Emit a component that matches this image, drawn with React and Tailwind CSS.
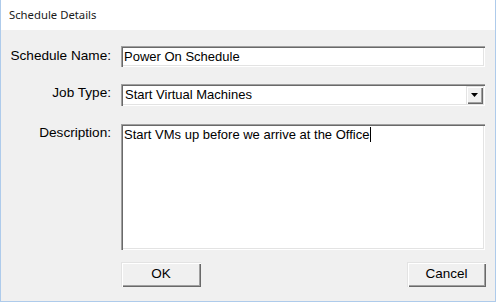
import React from "react";

const SUNKEN =
    "shadow-[inset_1px_1px_0_#a0a0a0,inset_2px_2px_0_#696969,inset_-1px_-1px_0_#ffffff,inset_-2px_-2px_0_#e3e3e3]";
const RAISED =
    "shadow-[inset_1px_1px_0_#e3e3e3,inset_2px_2px_0_#ffffff,inset_-1px_-1px_0_#696969,inset_-2px_-2px_0_#a0a0a0]";

function Label({ children, className = "" }) {
    return (
        <div className={`w-[110px] shrink-0 text-right text-[13.6px] ${className}`}>
            {children}
        </div>
    );
}

export default function App() {
    return (
        <div className="h-[303px] w-[500px] bg-white font-['Liberation_Sans',Arial,sans-serif] text-[13px] text-black">
            <div className="flex h-[302px] w-[496px] flex-col border-x border-b border-[#aecbeb]">
                {/* Title bar */}
                <div className="flex h-[30px] shrink-0 items-center bg-white pl-[8px] font-['Noto_Sans',sans-serif] text-[11.3px] text-[#1a1a1a]">
                    Schedule Details
                </div>

                {/* Body */}
                <div className="flex flex-1 flex-col bg-[#f0f0f0] pt-[16px] pr-[9px]">
                    <div className="flex items-center">
                        <Label>Schedule Name:</Label>
                        <div
                            className={`ml-[10px] flex h-[21px] w-[364px] items-center bg-white pl-[3px] ${SUNKEN}`}
                        >
                            Power On Schedule
                        </div>
                    </div>

                    <div className="mt-[17px] flex items-start">
                        <Label className="-mt-[1px]">Job Type:</Label>
                        <div
                            className={`ml-[10px] flex h-[22px] w-[364px] items-center justify-between bg-white pl-[4px] pr-[2px] ${SUNKEN}`}
                        >
                            <span>Start Virtual Machines</span>
                            <div
                                className={`flex h-[18px] w-[17px] items-center justify-center bg-[#f0f0f0] ${RAISED}`}
                            >
                                <svg width="7" height="4" viewBox="0 0 7 4">
                                    <path d="M0 0h7L3.5 4z" fill="#000" />
                                </svg>
                            </div>
                        </div>
                    </div>

                    <div className="mt-[18px] flex items-start">
                        <Label className="-mt-[1px]">Description:</Label>
                        <div
                            className={`ml-[10px] h-[126px] w-[364px] bg-white pl-[3px] leading-[15px] ${SUNKEN}`}
                        >
                            <span>Start VMs up before we arrive at the Office</span>
                            <span className="ml-[1px] inline-block h-[15px] w-[1px] translate-y-[3px] bg-black" />
                        </div>
                    </div>

                    <div className="mt-[12px] flex items-center justify-between pl-[120px] text-[13.5px]">
                        <button
                            className={`flex h-[25px] w-[80px] items-center justify-center bg-[#f0f0f0] ${RAISED}`}
                        >
                            OK
                        </button>
                        <button
                            className={`flex h-[25px] w-[79px] items-center justify-center bg-[#f0f0f0] ${RAISED}`}
                        >
                            Cancel
                        </button>
                    </div>
                </div>
            </div>
        </div>
    );
}
